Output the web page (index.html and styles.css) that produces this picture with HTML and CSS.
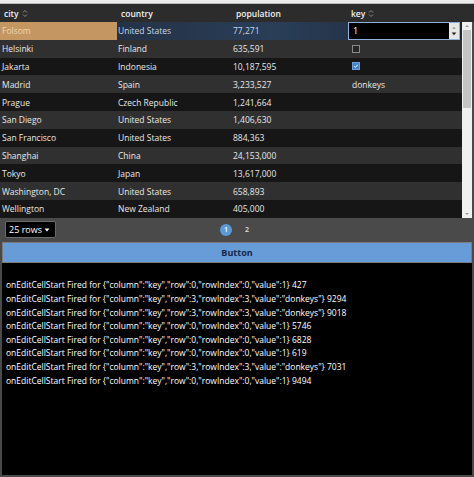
FILE: index.html
```html
<!DOCTYPE html>
<html lang="en">

<head>
    <meta charset="UTF-8" />
    <title>Grid Demo</title>
    <link rel="stylesheet" href="styles.css">
</head>

<body>
    <div class="topbar"></div>

    <div id="grid">
        <div class="grid-head">
            <div class="th">city <svg class="sort" viewBox="0 0 6 9"><path d="M1 3.5 L3 1.5 L5 3.5 M1 5.5 L3 7.5 L5 5.5" /></svg></div>
            <div class="th">country</div>
            <div class="th">population</div>
            <div class="th">key <svg class="sort" viewBox="0 0 6 9"><path d="M1 3.5 L3 1.5 L5 3.5 M1 5.5 L3 7.5 L5 5.5" /></svg></div>
            <div class="th"></div>
        </div>

        <div class="grid-body">
            <div class="rows">
                <div class="row selected">
                    <div class="td cell-active">Folsom</div>
                    <div class="td">United States</div>
                    <div class="td">77,271</div>
                    <div class="td editor-cell">
                        <div class="editor">
                            <span>1</span>
                            <div class="spin">
                                <svg viewBox="0 0 8 16"><path d="M2 6 L4 4 L6 6 Z" fill="#999" /><path d="M1.5 10 L4 13 L6.5 10 Z" fill="#222" /></svg>
                            </div>
                        </div>
                    </div>
                </div>
                <div class="row">
                    <div class="td">Helsinki</div>
                    <div class="td">Finland</div>
                    <div class="td">635,591</div>
                    <div class="td"><span class="check"></span></div>
                </div>
                <div class="row">
                    <div class="td">Jakarta</div>
                    <div class="td">Indonesia</div>
                    <div class="td">10,187,595</div>
                    <div class="td"><span class="check checked"><svg viewBox="0 0 10 10"><path d="M2 5.2 L4.2 7.3 L8 2.8" /></svg></span></div>
                </div>
                <div class="row">
                    <div class="td">Madrid</div>
                    <div class="td">Spain</div>
                    <div class="td">3,233,527</div>
                    <div class="td">donkeys</div>
                </div>
                <div class="row">
                    <div class="td">Prague</div>
                    <div class="td">Czech Republic</div>
                    <div class="td">1,241,664</div>
                    <div class="td"></div>
                </div>
                <div class="row">
                    <div class="td">San Diego</div>
                    <div class="td">United States</div>
                    <div class="td">1,406,630</div>
                    <div class="td"></div>
                </div>
                <div class="row">
                    <div class="td">San Francisco</div>
                    <div class="td">United States</div>
                    <div class="td">884,363</div>
                    <div class="td"></div>
                </div>
                <div class="row">
                    <div class="td">Shanghai</div>
                    <div class="td">China</div>
                    <div class="td">24,153,000</div>
                    <div class="td"></div>
                </div>
                <div class="row">
                    <div class="td">Tokyo</div>
                    <div class="td">Japan</div>
                    <div class="td">13,617,000</div>
                    <div class="td"></div>
                </div>
                <div class="row">
                    <div class="td">Washington, DC</div>
                    <div class="td">United States</div>
                    <div class="td">658,893</div>
                    <div class="td"></div>
                </div>
                <div class="row">
                    <div class="td">Wellington</div>
                    <div class="td">New Zealand</div>
                    <div class="td">405,000</div>
                    <div class="td"></div>
                </div>
            </div>

            <div class="scrollbar">
                <svg class="arrow" viewBox="0 0 8 8"><path d="M2 5 L4 3 L6 5 Z" /></svg>
                <div class="thumb"></div>
                <div class="track"></div>
                <svg class="arrow" viewBox="0 0 8 8"><path d="M2 3 L4 5 L6 3 Z" /></svg>
            </div>
        </div>

        <div class="grid-foot">
            <div class="pagesize"><span>25 rows</span> <svg viewBox="0 0 8 8"><path d="M1.5 2.5 L4 5.5 L6.5 2.5 Z" /></svg></div>
            <div class="pager">
                <span class="page current">1</span>
                <span class="page">2</span>
            </div>
        </div>
    </div>

    <button class="main-btn">Button</button>

    <div id="log">
        <div class="log-line">&nbsp;</div>
        <div class="log-line">onEditCellStart Fired for {"column":"key","row":0,"rowIndex":0,"value":1} 427</div>
        <div class="log-line">onEditCellStart Fired for {"column":"key","row":3,"rowIndex":3,"value":"donkeys"} 9294</div>
        <div class="log-line">onEditCellStart Fired for {"column":"key","row":3,"rowIndex":3,"value":"donkeys"} 9018</div>
        <div class="log-line">onEditCellStart Fired for {"column":"key","row":0,"rowIndex":0,"value":1} 5746</div>
        <div class="log-line">onEditCellStart Fired for {"column":"key","row":0,"rowIndex":0,"value":1} 6828</div>
        <div class="log-line">onEditCellStart Fired for {"column":"key","row":0,"rowIndex":0,"value":1} 619</div>
        <div class="log-line">onEditCellStart Fired for {"column":"key","row":3,"rowIndex":3,"value":"donkeys"} 7031</div>
        <div class="log-line">onEditCellStart Fired for {"column":"key","row":0,"rowIndex":0,"value":1} 9494</div>
    </div>
</body>

</html>
```

FILE: styles.css
```css
* {
    box-sizing: border-box;
}

html,
body {
    height: 100%;
}

body {
    margin: 0;
    display: flex;
    flex-direction: column;
    background: #4a4a4a;
    font-family: "Open Sans", "Noto Sans", sans-serif;
    font-size: 8.5px;
    color: #e8e8e8;
}

.topbar {
    height: 4px;
    background: #ececec;
    border-bottom: 1px solid #bbb;
}

/* Grid */
#grid {
    display: flex;
    flex-direction: column;
}

.grid-head,
.row {
    display: grid;
    grid-template-columns: 117px 115px 115px 115px;
}

.grid-head {
    grid-template-columns: 117px 115px 115px 115px 1fr;
    height: 18px;
    background: #2c2c2c;
}

.th {
    display: flex;
    align-items: center;
    gap: 3px;
    padding-left: 4px;
    font-size: 8.5px;
    font-weight: 600;
    color: #f2f2f2;
}

.sort {
    width: 6px;
    height: 9px;
    fill: none;
    stroke: #888;
    stroke-width: 1;
}

.grid-body {
    display: flex;
}

.rows {
    width: 462px;
}

.row {
    height: 17.8px;
    background: #303030;
}

.row:nth-child(odd) {
    background: #161616;
}

.row.selected {
    background: linear-gradient(to right, #1f2a38, #2a3e58 60%, #1c2533);
}

.td {
    display: flex;
    align-items: center;
    padding-left: 2px;
    white-space: nowrap;
    overflow: hidden;
}

.td:nth-child(2),
.td:nth-child(3) {
    padding-left: 1px;
}

.td:nth-child(4) {
    padding-left: 5px;
}

.selected .td {
    color: #c8d8ec;
}

.selected .cell-active {
    background: #c39662;
    color: #f3d7ad;
}

.selected .editor-cell {
    padding: 0 2px 0 1px;
}

.editor {
    flex: 1;
    height: 100%;
    display: flex;
    align-items: center;
    background: #000;
    border: 1px solid #8fb0d8;
    padding-left: 4px;
    color: #fff;
    font-size: 9px;
}

.editor span {
    flex: 1;
}

.spin {
    width: 10px;
    height: 100%;
    background: #e6e6e6;
    display: flex;
    align-items: center;
}

.spin svg {
    width: 10px;
    height: 15px;
}

.check {
    width: 8px;
    height: 8px;
    border: 1px solid #8a8a8a;
    background: #262626;
    display: flex;
}

.check.checked {
    background: #3f82d0;
    border-color: #6f9fd8;
}

.check svg {
    width: 100%;
    height: 100%;
    fill: none;
    stroke: #fff;
    stroke-width: 1.6;
}

.scrollbar {
    width: 10px;
    background: #f0f0f0;
    display: flex;
    flex-direction: column;
    align-items: center;
}

.arrow {
    width: 8px;
    height: 8px;
    fill: #9a9a9a;
    flex: none;
}

.thumb {
    width: 8px;
    height: 78px;
    background: #c4c4c4;
    flex: none;
}

.track {
    flex: 1;
}

.grid-foot {
    height: 24px;
    display: flex;
    align-items: center;
    position: relative;
    padding-left: 5px;
    background: #4a4a4a;
}

.pagesize {
    width: 51px;
    height: 17px;
    display: flex;
    align-items: center;
    justify-content: space-between;
    padding: 0 4px 0 3px;
    background: #000;
    border: 1px solid #6a6a6a;
    border-radius: 2px;
    color: #fff;
    font-size: 9px;
    white-space: nowrap;
}

.pagesize svg {
    width: 8px;
    height: 8px;
    flex: none;
    fill: #fff;
}

.pager {
    position: absolute;
    left: 220px;
    display: flex;
    align-items: center;
    gap: 9px;
}

.page {
    width: 12px;
    height: 12px;
    display: flex;
    align-items: center;
    justify-content: center;
    font-size: 7px;
    font-weight: 600;
    color: #e0e0e0;
}

.page.current {
    border-radius: 50%;
    background: #5b9ad8;
    color: #fff;
}

/* Button */
.main-btn {
    height: 21px;
    margin: 0 2px;
    border: 1px solid #7b7b7b;
    background: #689cd8;
    color: #16294a;
    font-family: inherit;
    font-size: 9px;
    font-weight: 700;
}

/* Log */
#log {
    flex: 1;
    margin: 0 2px 2px 2px;
    padding: 2px 4px;
    background: #000;
    color: #fff;
    font-size: 8.5px;
    line-height: 13.6px;
}

.log-line {
    white-space: nowrap;
}
```
